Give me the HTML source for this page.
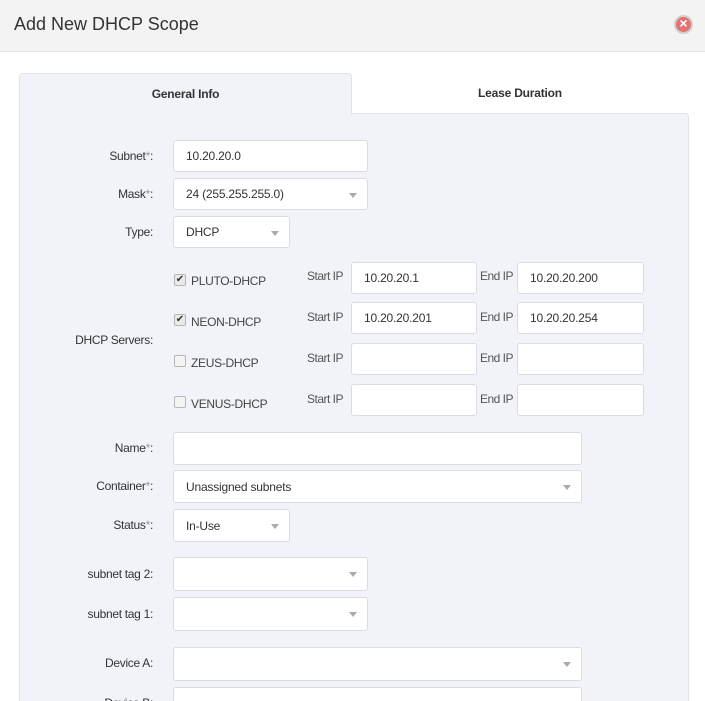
<!DOCTYPE html>
<html style="overflow:hidden;height:701px"><head><meta charset="utf-8"><style>
*{box-sizing:border-box;margin:0;padding:0}
body{width:705px;height:701px;overflow:hidden;background:#fff;font-family:"Liberation Sans",sans-serif;position:relative;color:#333}
.hdr{position:absolute;left:0;top:0;width:705px;height:52px;background:#f3f3f3;border-bottom:1px solid #e6e6e6}
.hdr h1{position:absolute;left:14px;top:14px;font-size:18px;font-weight:normal;color:#333}
.x{position:absolute;left:674px;top:15px;width:19px;height:19px;border-radius:50%;background:#e57373;border:2px solid #d0d0d0}
.x:after{content:"×";position:absolute;left:0;top:-2px;width:15px;text-align:center;color:#fff;font-size:14px;font-weight:bold}
.tab1{position:absolute;left:19px;top:73px;width:333px;height:42px;background:#f1f3f8;border:1px solid #dfe2e8;border-bottom:none;border-radius:4px 4px 0 0;z-index:2;text-align:center;font-size:12px;font-weight:bold;padding-top:13px;color:#333;letter-spacing:-0.2px}
.tab2{position:absolute;left:352px;top:73px;width:336px;height:40px;text-align:center;font-size:12px;font-weight:bold;padding-top:13px;color:#333;letter-spacing:-0.2px}
.panel{position:absolute;left:19px;top:113px;width:670px;height:588px;background:#f1f3f8;border:1px solid #dfe2e8;border-bottom:none;border-radius:0 4px 0 0}
.l{position:absolute;font-size:12px;color:#333;text-align:right;width:150px;left:3px;letter-spacing:-0.3px}
.l i{font-style:normal;color:#999}
.in{position:absolute;background:#fff;border:1px solid #d9dce2;border-radius:3px;font-size:12px;color:#333;padding:0 12px;display:flex;align-items:center;letter-spacing:-0.2px}
.dd:after{content:"";position:absolute;right:10px;top:14px;border-left:4px solid transparent;border-right:4px solid transparent;border-top:5px solid #aaa}
.cb{position:absolute;left:174px;width:12px;height:12px;border:1px solid #b5b5b5;background:#e8e8e8;border-radius:2px;font-size:10px;line-height:10px;text-align:center;color:#333}
.cl{position:absolute;left:191px;font-size:12px;color:#444;letter-spacing:-0.3px}
.sl{position:absolute;font-size:12px;color:#555;letter-spacing:-0.5px}
</style></head><body>
<div class="hdr"><h1>Add New DHCP Scope</h1><div class="x"></div></div>
<div class="panel"></div>
<div class="tab1">General Info</div>
<div class="tab2">Lease Duration</div>

<div class="l" style="top:149px">Subnet<i>*</i>:</div>
<div class="in" style="left:173px;top:140px;width:195px;height:32px">10.20.20.0</div>
<div class="l" style="top:187px">Mask<i>*</i>:</div>
<div class="in dd" style="left:173px;top:178px;width:195px;height:32px">24 (255.255.255.0)</div>
<div class="l" style="top:225px">Type:</div>
<div class="in dd" style="left:173px;top:216px;width:117px;height:32px">DHCP</div>

<div class="l" style="top:333px">DHCP Servers:</div>
<div class="cb" style="top:274px">✔</div><div class="cl" style="top:274px">PLUTO-DHCP</div>
<div class="cb" style="top:314px">✔</div><div class="cl" style="top:315px">NEON-DHCP</div>
<div class="cb" style="top:355px;background:#f4f4f4"></div><div class="cl" style="top:356px">ZEUS-DHCP</div>
<div class="cb" style="top:396px;background:#f4f4f4"></div><div class="cl" style="top:397px">VENUS-DHCP</div>

<div class="sl" style="left:307px;top:269px">Start IP</div><div class="in" style="left:351px;top:262px;width:126px;height:32px">10.20.20.1</div>
<div class="sl" style="left:480px;top:269px">End IP</div><div class="in" style="left:517px;top:262px;width:127px;height:32px">10.20.20.200</div>
<div class="sl" style="left:307px;top:310px">Start IP</div><div class="in" style="left:351px;top:302px;width:126px;height:32px">10.20.20.201</div>
<div class="sl" style="left:480px;top:310px">End IP</div><div class="in" style="left:517px;top:302px;width:127px;height:32px">10.20.20.254</div>
<div class="sl" style="left:307px;top:351px">Start IP</div><div class="in" style="left:351px;top:343px;width:126px;height:32px"></div>
<div class="sl" style="left:480px;top:351px">End IP</div><div class="in" style="left:517px;top:343px;width:127px;height:32px"></div>
<div class="sl" style="left:307px;top:392px">Start IP</div><div class="in" style="left:351px;top:384px;width:126px;height:32px"></div>
<div class="sl" style="left:480px;top:392px">End IP</div><div class="in" style="left:517px;top:384px;width:127px;height:32px"></div>

<div class="l" style="top:441px">Name<i>*</i>:</div>
<div class="in" style="left:173px;top:432px;width:409px;height:33px"></div>
<div class="l" style="top:479px">Container<i>*</i>:</div>
<div class="in dd" style="left:173px;top:470px;width:409px;height:33px">Unassigned subnets</div>
<div class="l" style="top:518px">Status<i>*</i>:</div>
<div class="in dd" style="left:173px;top:509px;width:117px;height:33px">In-Use</div>

<div class="l" style="top:567px">subnet tag 2:</div>
<div class="in dd" style="left:173px;top:557px;width:195px;height:34px"></div>
<div class="l" style="top:607px">subnet tag 1:</div>
<div class="in dd" style="left:173px;top:597px;width:195px;height:34px"></div>

<div class="l" style="top:656px">Device A:</div>
<div class="in dd" style="left:173px;top:647px;width:409px;height:34px"></div>
<div class="l" style="top:696px">Device B:</div>
<div class="in" style="left:173px;top:687px;width:409px;height:34px"></div>
</body></html>
